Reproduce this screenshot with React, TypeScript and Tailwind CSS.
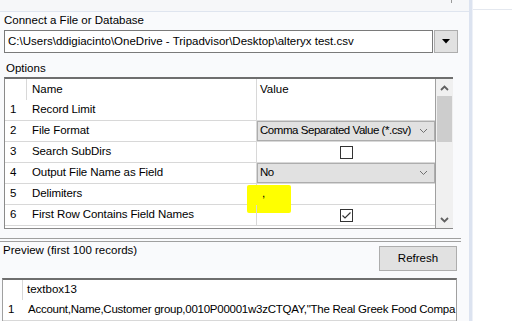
import React from "react";

const font = { fontFamily: '"Segoe UI", "Liberation Sans", Arial, sans-serif' };

function Chevron({ up = false, bold = false }: { up?: boolean; bold?: boolean }) {
  return (
    <svg width="9" height="6" viewBox="0 0 9 6">
      <path
        d={up ? "M1 5 L4.5 1.5 L8 5" : "M1 1 L4.5 4.5 L8 1"}
        fill="none"
        stroke={bold ? "#606060" : "#707070"}
        strokeWidth={bold ? 1.8 : 1}
      />
    </svg>
  );
}

function Checkbox({ checked }: { checked?: boolean }) {
  return (
    <div className="w-[13px] h-[13px] border border-[#333333] bg-white flex items-center justify-center">
      {checked && (
        <svg width="11" height="11" viewBox="0 0 11 11">
          <path d="M1.5 5.5 L4 8 L9.5 2.5" fill="none" stroke="#333" strokeWidth="1.2" />
        </svg>
      )}
    </div>
  );
}

function Combo({ text }: { text: string }) {
  return (
    <div className="h-full w-full bg-[#e1e1e1] border border-[#adadad] flex items-center justify-between pl-[2px] pr-[6px] whitespace-nowrap">
      <span className="tracking-[-0.45px]">{text}</span>
      <Chevron />
    </div>
  );
}

const rows: { n: number; name: string; value: React.ReactNode }[] = [
  { n: 1, name: "Record Limit", value: null },
  { n: 2, name: "File Format", value: <Combo text={'Comma Separated Value (*.csv)'} /> },
  { n: 3, name: "Search SubDirs", value: <div className="h-full flex items-center justify-center"><Checkbox /></div> },
  { n: 4, name: "Output File Name as Field", value: <Combo text="No" /> },
  { n: 5, name: "Delimiters", value: <div className="h-full flex items-center pl-[5px]">,</div> },
  { n: 6, name: "First Row Contains Field Names", value: <div className="h-full flex items-center justify-center"><Checkbox checked /></div> },
];

export default function App() {
  return (
    <div className="w-[512px] h-[321px] overflow-hidden flex bg-white text-[11.5px] text-black" style={font}>
      {/* Left panel */}
      <div className="w-[469px] h-full bg-[#f9fafc] flex flex-col relative">
        <div className="h-[12px] border-b border-[#dfe5ef] bg-[#f6f7f9] relative">
          <div className="absolute left-[451px] top-0 w-[1px] h-[3px] bg-[#9a9a9a]" />
        </div>
        <div className="h-[17px] pl-[4px] leading-[16px]">Connect a File or Database</div>
        <div className="flex h-[23px] pl-[4px] mt-[1px]">
          <div className="w-[429px] h-[23px] border border-[#7a7a7a] bg-white flex items-center pl-[3px] whitespace-nowrap overflow-hidden">
            C:\Users\ddigiacinto\OneDrive - Tripadvisor\Desktop\alteryx test.csv
          </div>
          <div className="w-[24px] h-[23px] ml-[1px] bg-[#e1e1e1] border border-[#adadad] flex items-center justify-center">
            <svg width="8" height="5" viewBox="0 0 8 5"><path d="M0 0 H8 L4 4.5 Z" fill="#000" /></svg>
          </div>
        </div>
        <div className="h-[16px] mt-[7px] pl-[6px] leading-[16px]">Options</div>
        {/* Options grid */}
        <div className="ml-[4px] mt-[1px] w-[449px] h-[152px] border-t-2 border-l border-b border-[#8a8a8a] border-t-[#6e6e6e] bg-white flex">
          <div className="w-[431px] flex flex-col border-r border-[#a0a0a0] relative">
            <div className="h-[21px] flex items-center">
              <div className="w-[22px] h-full border-r border-[#d8d8d8]" />
              <div className="w-[229px] pl-[5px]">Name</div>
              <div className="flex-1 h-full border-l border-[#d8d8d8] flex items-center pl-[3px]">Value</div>
            </div>
            {rows.map((r) => (
              <div key={r.n} className="h-[21px] flex border-b border-[#d8d8d8]">
                <div className="w-[22px] shrink-0 pl-[5px] flex items-center">{r.n}</div>
                <div className="w-[229px] shrink-0 pl-[5px] flex items-center tracking-[-0.1px]">{r.name}</div>
                <div className="flex-1 h-full border-l border-[#d8d8d8] relative">
                  {r.n === 5 && (
                    <div className="absolute left-[-10px] top-[1px] w-[44px] h-[28px] bg-[#ffff00] rounded-[2px]" />
                  )}
                  <div className="relative h-full">{r.value}</div>
                </div>
              </div>
            ))}
          </div>
          {/* scrollbar */}
          <div className="w-[17px] h-full bg-[#f0f0f0] flex flex-col items-center">
            <div className="h-[17px] flex items-center justify-center"><Chevron up bold /></div>
            <div className="w-[15px] h-[46px] bg-[#cdcdcd]" />
            <div className="flex-1" />
            <div className="h-[17px] flex items-center justify-center"><Chevron bold /></div>
          </div>
        </div>
        {/* splitter */}
        <div className="mt-[9px] h-[1px] w-[461px] bg-[#a0a0a0]" />
        <div className="mt-[2px] h-[1px] w-[461px] bg-[#a0a0a0]" />
        <div className="flex h-[29px]">
          <div className="pl-[3px] leading-[16px] flex-1 self-start">Preview (first 100 records)</div>
          <div className="w-[78px] h-[25px] mt-[4px] mr-[12px] bg-[#e1e1e1] border border-[#adadad] flex items-center justify-center">Refresh</div>
        </div>
        {/* preview grid */}
        <div className="ml-[2px] mt-[7px] w-[455px] flex-1 border-t-2 border-l border-r border-[#6e6e6e] border-l-[#a0a0a0] border-r-[#a0a0a0] bg-white">
          <div className="h-[20px] flex items-center">
            <div className="w-[20px] h-full border-r border-[#d8d8d8]" />
            <div className="pl-[4px]">textbox13</div>
          </div>
          <div className="h-[21px] flex items-center border-b border-[#d8d8d8] whitespace-nowrap overflow-hidden">
            <div className="w-[21px] shrink-0 pl-[5px]">1</div>
            <div className="pl-[4px] tracking-[-0.25px]">Account,Name,Customer group,0010P00001w3zCTQAY,"The Real Greek Food Compa</div>
          </div>
        </div>
      </div>
      {/* divider */}
      <div className="w-[4px] h-full bg-[#dce3f0] border-r border-[#eef1f7]" />
      {/* right panel */}
      <div className="flex-1 h-full bg-white">
        <div className="h-[10px] border-b border-[#e4e8ef]" />
      </div>
    </div>
  );
}
